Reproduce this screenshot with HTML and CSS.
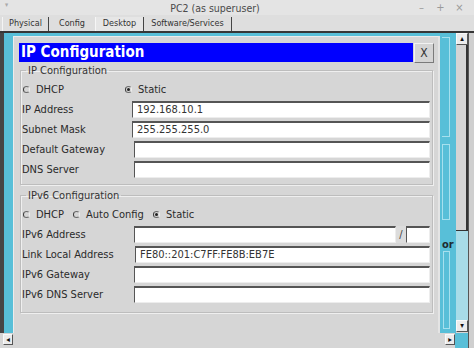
FILE: index.html
```html
<!DOCTYPE html>
<html>
<head>
<title>PC2 (as superuser)</title>
<link rel="stylesheet" href="styles.css">
</head>
<body>

<div class="titlebar">
    <span class="menu-btn">&#9662;</span>
    <span class="title">PC2 (as superuser)</span>
    <span class="controls"><span>&ndash;</span><span>+</span><span>&times;</span></span>
</div>

<div class="tabs">
    <span class="tab tab-physical">Physical</span>
    <span class="tab tab-config">Config</span>
    <span class="tab tab-desktop active">Desktop</span>
    <span class="tab tab-software">Software/Services</span>
</div>

<div class="desk">
    <div class="desk-edge"></div>
    <div class="viewport">
        <div class="dialog">
            <div class="dialog-head">
                <div class="dialog-title">IP Configuration</div>
                <button class="close-btn">X</button>
            </div>

            <fieldset class="group group-v4">
                <legend>IP Configuration</legend>
                <div class="row radios">
                    <label class="radio r-dhcp4"><span class="dot"></span>DHCP</label>
                    <label class="radio"><span class="dot checked"></span>Static</label>
                </div>
                <div class="row"><span class="lbl">IP Address</span><input class="field" value="192.168.10.1"></div>
                <div class="row"><span class="lbl">Subnet Mask</span><input class="field" value="255.255.255.0"></div>
                <div class="row"><span class="lbl wide">Default Gateway</span><input class="field" value=""></div>
                <div class="row"><span class="lbl wide">DNS Server</span><input class="field" value=""></div>
            </fieldset>

            <fieldset class="group group-v6">
                <legend>IPv6 Configuration</legend>
                <div class="row radios">
                    <label class="radio r-dhcp6"><span class="dot"></span>DHCP</label>
                    <label class="radio r-auto"><span class="dot"></span>Auto Config</label>
                    <label class="radio"><span class="dot checked"></span>Static</label>
                </div>
                <div class="row">
                    <span class="lbl wide">IPv6 Address</span>
                    <input class="field" value="">
                    <span class="slash">/</span>
                    <input class="field prefix" value="">
                </div>
                <div class="row"><span class="lbl wider">Link Local Address</span><input class="field" value="FE80::201:C7FF:FE8B:EB7E"></div>
                <div class="row"><span class="lbl wide">IPv6 Gateway</span><input class="field" value=""></div>
                <div class="row"><span class="lbl wide">IPv6 DNS Server</span><input class="field" value=""></div>
            </fieldset>
        </div>

        <div class="backdrop">
            <div class="ghost ghost-a"></div>
            <div class="ghost ghost-b"></div>
            <div class="ghost ghost-c"></div>
            <span class="ghost-text">or</span>
        </div>
    </div>
    <div class="vscroll">
        <div class="arrow-btn up">&#9652;</div>
        <div class="thumb"></div>
        <div class="track"></div>
        <div class="arrow-btn down">&#9662;</div>
    </div>
    <div class="desk-right"></div>
</div>

<div class="hscroll">
    <div class="arrow-btn left">&#9666;</div>
    <div class="htrack"></div>
    <div class="arrow-btn right">&#9656;</div>
    <div class="hcorner"></div>
    <div class="desk-right"></div>
</div>

</body>
</html>
```

FILE: styles.css
```css
* {
    box-sizing: border-box;
}

body {
    margin: 0;
    width: 474px;
    height: 348px;
    overflow: hidden;
    background: #d6d6d6;
    font-family: "DejaVu Sans Condensed", "DejaVu Sans", sans-serif;
    font-stretch: condensed;
    color: #2a2a2a;
}

/* window chrome */
.titlebar {
    height: 15px;
    background: #e4e4e4;
    display: flex;
    align-items: center;
    position: relative;
    font-size: 10.5px;
    color: #4a4a4a;
}

.menu-btn {
    position: absolute;
    left: 5px;
    top: 1px;
    font-size: 7px;
    color: #aaa;
}

.title {
    flex: 1;
    text-align: center;
    padding-left: 18px;
}

.controls {
    display: flex;
    padding-right: 5px;
    color: #9a9a9a;
    font-size: 11px;
}

.controls span {
    width: 19px;
    text-align: center;
}

.tabs {
    height: 16px;
    background: #dedede;
    display: flex;
    padding: 2px 0 0 2px;
}

.tab {
    height: 14px;
    line-height: 13px;
    font-size: 9px;
    text-align: center;
    color: #333;
}

.tab-physical { width: 47px; border-right: 1px solid #444; border-left: 1px solid #f4f4f4; }
.tab-config { width: 46px; }
.tab-desktop { width: 49px; border-right: 1px solid #444; }
.tab-software { width: 88px; border-right: 1px solid #444; }

.tab.active {
    background: #e6e6e6;
    border-left: 1px solid #f6f6f6;
}

/* desktop area */
.desk {
    display: flex;
    height: 302px;
    border-top: 2px solid #363636;
}

.desk-edge {
    width: 4px;
    background: #464646;
}

.viewport {
    width: 452px;
    background: #58bfd8;
    padding: 3px 0 0 9px;
    display: flex;
    overflow: hidden;
}

.dialog {
    width: 427px;
    height: 320px;
    background: #d6d6d6;
    border-top: 1px solid #ececec;
    border-left: 1px solid #ececec;
    border-right: 2px solid #e4e4e4;
    flex-shrink: 0;
}

.dialog-head {
    display: flex;
    gap: 1px;
    padding: 6px 4px 0 5px;
}

.dialog-title {
    flex: 1;
    height: 19px;
    line-height: 19px;
    background: #0000ff;
    color: #fff;
    font-weight: bold;
    font-size: 15px;
    padding-left: 2px;
}

.close-btn {
    width: 20px;
    height: 20px;
    padding: 0;
    background: #d4d4d4;
    border: 1px solid;
    border-color: #f2f2f2 #7a7a7a #7a7a7a #f2f2f2;
    font-family: inherit;
    font-size: 12px;
    color: #333;
}

.group {
    margin: 1px 5px 0 6px;
    padding: 2px 2px 5px 1px;
    border: 1px solid #bdbdbd;
    box-shadow: inset 1px 1px 0 #efefef, 1px 1px 0 #efefef;
    font-size: 11px;
}

.group-v6 {
    margin-top: 4px;
    padding-bottom: 8px;
}

.group legend {
    padding: 0 2px;
    margin-left: 4px;
    line-height: 13px;
    color: #333;
}

.row {
    display: flex;
    align-items: center;
    height: 20px;
}

.radios {
    padding-left: 1px;
}

.radio {
    display: flex;
    align-items: center;
    gap: 6px;
}

.r-dhcp4 { width: 102px; }
.r-dhcp6 { width: 50px; }
.r-auto { width: 80px; }

.dot {
    width: 7px;
    height: 7px;
    border-radius: 50%;
    border: 1px solid;
    border-color: #6a6a6a #eeeeee #6a6a6a #3a3a3a;
    display: flex;
    align-items: center;
    justify-content: center;
}

.dot.checked::after {
    content: "";
    width: 3px;
    height: 3px;
    border-radius: 50%;
    background: #222;
}

.lbl {
    width: 110px;
    flex-shrink: 0;
}

.lbl.wide { width: 112px; }
.lbl.wider { width: 113px; }

.field {
    flex: 1;
    min-width: 0;
    height: 17px;
    background: #fff;
    border: 1px solid;
    border-top: 2px solid #555;
    border-color: #555 #ededed #ededed #555;
    font-family: inherit;
    font-stretch: condensed;
    font-size: 11px;
    color: #333;
    padding: 0 0 0 4px;
    outline: none;
}

.slash {
    width: 10px;
    text-align: center;
    color: #444;
    background: #dcdcdc;
    height: 17px;
    line-height: 17px;
}

.field.prefix {
    flex: 0 0 24px;
}

/* desktop window edges behind the dialog */
.backdrop {
    flex: 1;
    position: relative;
}

.ghost {
    position: absolute;
    border: 1px solid #a6e0ee;
}

.ghost-a { left: 2px; top: 1px; width: 8px; height: 100px; border-left: none; }
.ghost-b { left: 2px; top: 108px; width: 8px; height: 76px; }
.ghost-c { left: 3px; top: 215px; width: 7px; height: 78px; }

.ghost-text {
    position: absolute;
    left: 2px;
    top: 202px;
    font-size: 11px;
    font-weight: bold;
    color: #1e2a30;
}

.vscroll {
    width: 12px;
    display: flex;
    flex-direction: column;
}

.arrow-btn {
    height: 12px;
    background: #ececec;
    border: 1px solid;
    border-color: #fafafa #555 #555 #fafafa;
    font-size: 8px;
    line-height: 10px;
    text-align: center;
    color: #111;
}

.thumb {
    height: 186px;
    background: #d4d4d4;
    border-right: 2px solid #333;
    border-bottom: 1px solid #333;
}

.track {
    flex: 1;
    background: #a8dce8;
}

.vscroll .down {
    margin-bottom: 1px;
}

.desk-right {
    width: 6px;
    background: #cfcfcf;
    border-left: 1px solid #555;
}

.hscroll {
    display: flex;
    height: 15px;
    padding-left: 3px;
}

.hscroll .arrow-btn {
    width: 10px;
    height: 11px;
    margin-top: 1px;
}

.htrack {
    width: 432px;
}

.hcorner {
    width: 13px;
    background: #58bfd8;
}
```
